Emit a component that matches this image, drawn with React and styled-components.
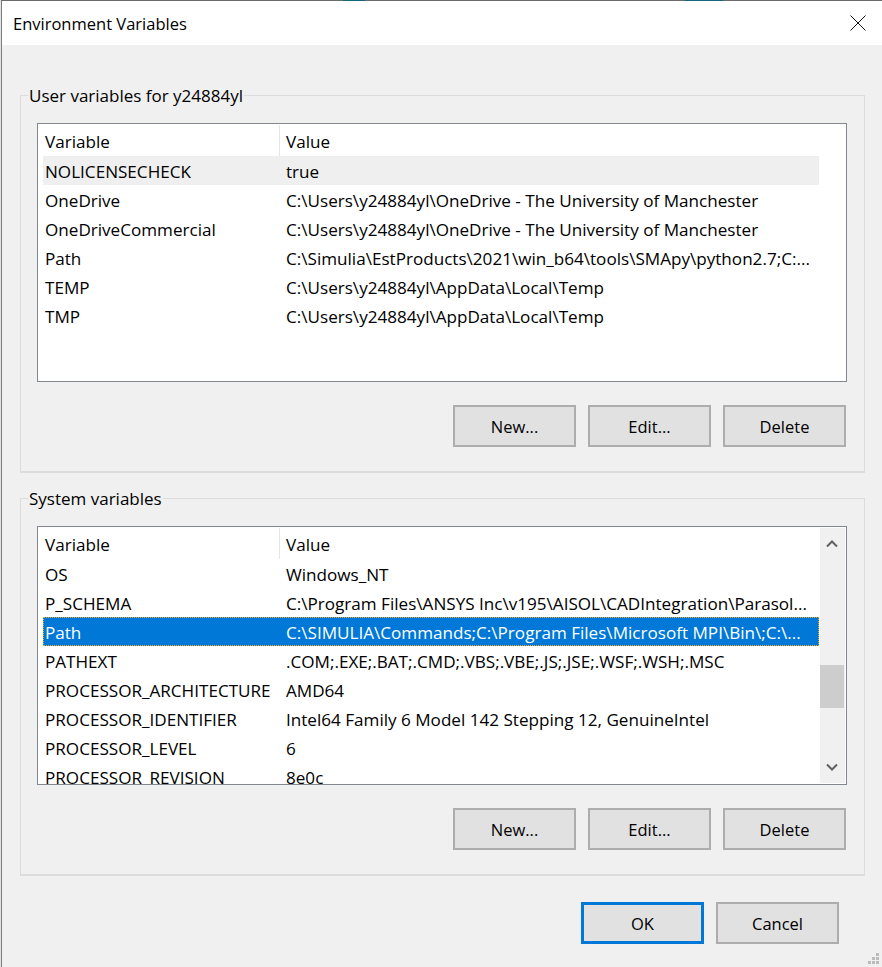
import styled, { createGlobalStyle } from "styled-components";

const userVars = [
  ["NOLICENSECHECK", "true"],
  ["OneDrive", "C:\\Users\\y24884yl\\OneDrive - The University of Manchester"],
  ["OneDriveCommercial", "C:\\Users\\y24884yl\\OneDrive - The University of Manchester"],
  ["Path", "C:\\Simulia\\EstProducts\\2021\\win_b64\\tools\\SMApy\\python2.7;C:..."],
  ["TEMP", "C:\\Users\\y24884yl\\AppData\\Local\\Temp"],
  ["TMP", "C:\\Users\\y24884yl\\AppData\\Local\\Temp"],
];

const systemVars = [
  ["OS", "Windows_NT"],
  ["P_SCHEMA", "C:\\Program Files\\ANSYS Inc\\v195\\AISOL\\CADIntegration\\Parasol..."],
  ["Path", "C:\\SIMULIA\\Commands;C:\\Program Files\\Microsoft MPI\\Bin\\;C:\\..."],
  ["PATHEXT", ".COM;.EXE;.BAT;.CMD;.VBS;.VBE;.JS;.JSE;.WSF;.WSH;.MSC"],
  ["PROCESSOR_ARCHITECTURE", "AMD64"],
  ["PROCESSOR_IDENTIFIER", "Intel64 Family 6 Model 142 Stepping 12, GenuineIntel"],
  ["PROCESSOR_LEVEL", "6"],
  ["PROCESSOR_REVISION", "8e0c"],
];

function VarList({ rows, hover, selected, scroll }) {
  return (
    <ListBox>
      <Rows>
        <HeadRow>
          <HeadCell>Variable</HeadCell>
          <HeadCell $last>Value</HeadCell>
        </HeadRow>
        {rows.map(([name, value], i) => (
          <Row key={name} $hover={i === hover} $selected={i === selected}>
            <NameCell>{name}</NameCell>
            <span>{value}</span>
          </Row>
        ))}
      </Rows>
      {scroll && (
        <ScrollBar>
          <ScrollArrow viewBox="0 0 12 8">
            <path d="M1 6.5 6 1.5 11 6.5" />
          </ScrollArrow>
          <Track>
            <Thumb />
          </Track>
          <ScrollArrow viewBox="0 0 12 8">
            <path d="M1 1.5 6 6.5 11 1.5" />
          </ScrollArrow>
        </ScrollBar>
      )}
    </ListBox>
  );
}

function ActionRow() {
  return (
    <Actions>
      <Button>New...</Button>
      <Button>Edit...</Button>
      <Button>Delete</Button>
    </Actions>
  );
}

export default function App() {
  return (
    <>
      <Global />
      <Dialog>
        <TopEdge />
        <TitleBar>
          <Title>Environment Variables</Title>
          <CloseIcon viewBox="0 0 16 16">
            <path d="M0.5 0.5 15.5 15.5M15.5 0.5 0.5 15.5" />
          </CloseIcon>
        </TitleBar>
        <Body>
          <Group>
            <Legend>User variables for y24884yl</Legend>
            <VarList rows={userVars} hover={0} />
            <ActionRow />
          </Group>
          <Group $second>
            <Legend>System variables</Legend>
            <VarList rows={systemVars} selected={2} scroll />
            <ActionRow />
          </Group>
          <Footer>
            <Button $primary>OK</Button>
            <Button>Cancel</Button>
          </Footer>
          <Grip viewBox="0 0 12 12">
            <path d="M8 0h3v3H8zM4 4h3v3H4zM8 4h3v3H8zM0 8h3v3H0zM4 8h3v3H4zM8 8h3v3H8z" />
          </Grip>
        </Body>
      </Dialog>
    </>
  );
}

const Global = createGlobalStyle`
  html, body {
    margin: 0;
    padding: 0;
    background: #f0f0f0;
  }
  body {
    font-family: "Open Sans", "Noto Sans", sans-serif;
    font-size: 16.5px;
    color: #000;
  }
`;

const Dialog = styled.div`
  width: 882px;
  height: 967px;
  box-sizing: border-box;
  position: relative;
  overflow: hidden;
  border-left: 1px solid #e2e2e2;
  background: #f0f0f0;
`;

// the desktop showing through above the window
const TopEdge = styled.div`
  height: 1px;
  background: linear-gradient(
    to right,
    #6b6b6b 0 342px,
    #12677a 342px 364px,
    #6b6b6b 364px 684px,
    #12677a 684px 722px,
    #6b6b6b 722px
  );
`;

const TitleBar = styled.div`
  height: 44px;
  background: #fff;
  border-left: 1px solid #7d7d7d;
  display: flex;
  align-items: center;
  justify-content: space-between;
  padding: 0 16px 0 11px;
`;

const Title = styled.span`
  font-size: 16.5px;
`;

const CloseIcon = styled.svg`
  width: 16px;
  height: 16px;
  fill: none;
  stroke: #111;
  stroke-width: 1;
`;

const Body = styled.div`
  position: relative;
  height: 922px;
  box-sizing: border-box;
  border-left: 1px solid #7d7d7d;
  padding: 50px 17px 0 18px;
`;

const Group = styled.section`
  position: relative;
  height: 378px;
  box-sizing: border-box;
  margin-top: ${(p) => (p.$second ? "25px" : "0")};
  padding: 27px 17px 0 16px;
  border: 2px solid #dcdcdc;
  border-width: 1px 1px 2px 1px;
`;

const Legend = styled.span`
  position: absolute;
  top: -12px;
  left: 7px;
  padding: 0 1px;
  font-size: 17px;
  line-height: 23px;
  background: #f0f0f0;
`;

const ListBox = styled.div`
  height: 259px;
  box-sizing: border-box;
  display: flex;
  background: #fff;
  border: 1px solid #828790;
  font-size: 17.1px;
  overflow: hidden;
`;

const Rows = styled.div`
  flex: 1;
  min-width: 0;
  padding: 1px 0 0 5px;
`;

const HeadRow = styled.div`
  height: 31px;
  width: 776px;
  display: flex;
  align-items: center;
  box-sizing: border-box;
`;

const HeadCell = styled.span`
  box-sizing: border-box;
  width: ${(p) => (p.$last ? "auto" : "237px")};
  padding: 2px 0 0 ${(p) => (p.$last ? "6px" : "2px")};
  height: 100%;
  display: flex;
  align-items: center;
  border-right: ${(p) => (p.$last ? "none" : "1px solid #e5e5e5")};
`;

const Row = styled.div`
  width: 776px;
  height: 29px;
  box-sizing: border-box;
  padding-top: 2px;
  display: flex;
  align-items: center;
  white-space: nowrap;
  background: ${(p) => (p.$selected ? "#0078d7" : p.$hover ? "#efefef" : "transparent")};
  color: ${(p) => (p.$selected ? "#fff" : "#000")};
  outline: ${(p) => (p.$selected ? "1px dotted #f5a623" : "none")};
  outline-offset: -1px;
  span:last-child {
    padding-left: 6px;
  }
`;

const NameCell = styled.span`
  width: 237px;
  padding-left: 2px;
  box-sizing: border-box;
  flex-shrink: 0;
  overflow: hidden;
`;

const ScrollBar = styled.div`
  width: 25px;
  flex-shrink: 0;
  background: #f0f0f0;
  margin: 1px 1px 1px 0;
  display: flex;
  flex-direction: column;
  align-items: flex-start;
`;

const ScrollArrow = styled.svg`
  width: 12px;
  height: 8px;
  margin: 12px 0 12px 6px;
  flex-shrink: 0;
  fill: none;
  stroke: #606060;
  stroke-width: 2;
`;

const Track = styled.div`
  flex: 1;
  width: 100%;
  padding-top: 105px;
  box-sizing: border-box;
`;

const Thumb = styled.div`
  height: 43px;
  width: 24px;
  background: #cdcdcd;
`;

const Actions = styled.div`
  display: flex;
  justify-content: flex-end;
  gap: 12px;
  margin: 23px 1px 0 0;
`;

const Button = styled.button`
  width: 123px;
  height: 42px;
  padding: 0;
  box-sizing: border-box;
  font: inherit;
  color: #000;
  background: #e1e1e1;
  border: ${(p) => (p.$primary ? "3px solid #0078d7" : "2px solid #adadad")};
`;

const Footer = styled.div`
  display: flex;
  justify-content: flex-end;
  gap: 12px;
  margin: 26px 26px 0 0;
`;

const Grip = styled.svg`
  position: absolute;
  right: 2px;
  bottom: 2px;
  width: 12px;
  height: 12px;
  fill: #bcbcbc;
`;
